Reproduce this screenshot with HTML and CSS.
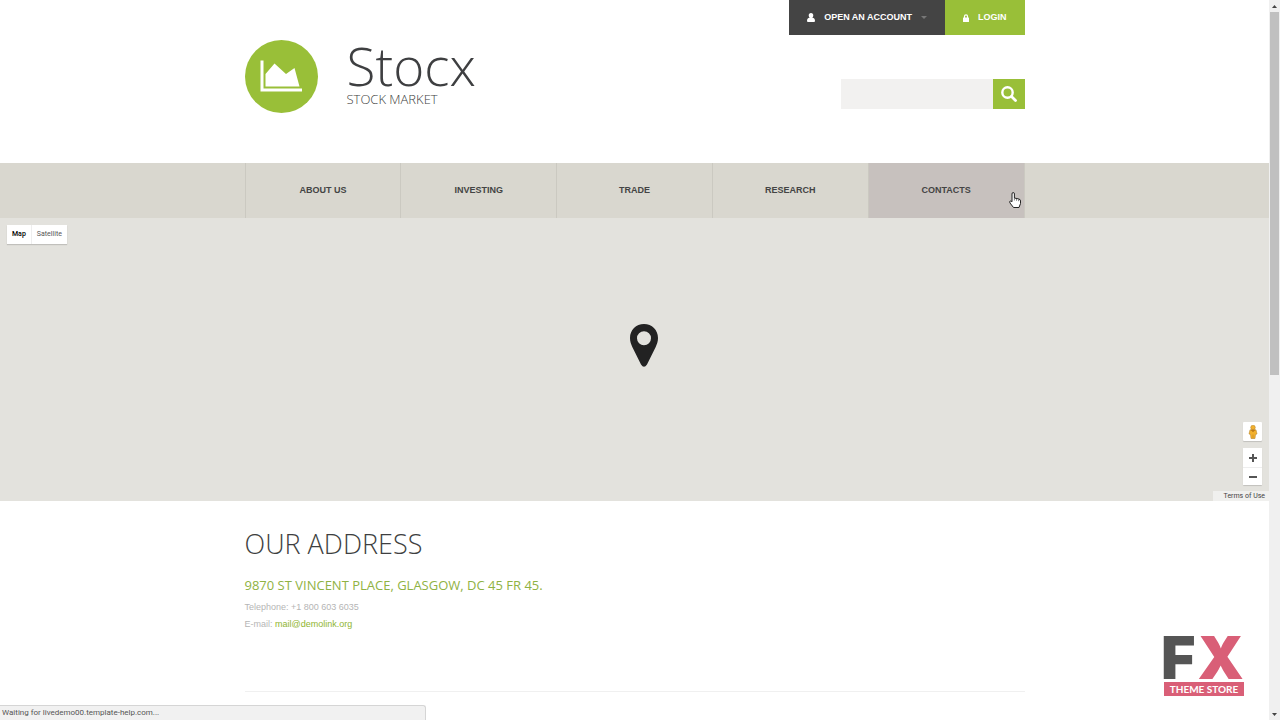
FILE: index.html
```
<!DOCTYPE html>
<html lang="en">
  <head>
    <meta charset="UTF-8" />
    <title>Stocx - Contacts</title>
    <link rel="stylesheet" href="styles.css">
  </head>
  <body>
    <div class="page">
      <header class="container header">
        <a class="brand" href="#">
          <svg class="brand-icon" viewBox="0 0 73 73" aria-hidden="true">
            <circle cx="36.500" cy="36.500" r="36.500" fill="#99bf38" />
            <path d="M15.500 20.500h3v28h38.500v3H15.500z" fill="#fff" />
            <path d="M20.500 46.500V34l9-10.500L41 34l8.500-6 5 18.500z" fill="#fff" />
          </svg>
          <span class="brand-text">
            <span class="brand-name">Stocx</span>
            <span class="brand-slogan">STOCK MARKET</span>
          </span>
        </a>
        <div class="header-right">
          <div class="user-links">
            <a class="account" href="#">
              <svg class="icon-user" viewBox="0 0 8 9" aria-hidden="true">
                <path d="M4 0C5.500 0 6.300 1.100 6.300 2.500c0 1-.4 1.800-1 2.300C7.300 5 8 6.200 8 8q0 1-1 1H1Q0 9 0 8c0-1.800.7-3 2.700-3.200-.6-.5-1-1.300-1-2.300C1.700 1.100 2.500 0 4 0z" fill="#fff" />
              </svg>
              <span>OPEN AN ACCOUNT</span>
              <svg class="icon-caret" viewBox="0 0 6 3" aria-hidden="true"><path d="M0 0h6L3 3z" fill="#777" /></svg>
            </a>
            <a class="login" href="#">
              <svg class="icon-lock" viewBox="0 0 6 8" aria-hidden="true">
                <path d="M1.500 4V2.300a1.500 1.500 0 0 1 3 0V4" fill="none" stroke="#fff" stroke-width="1.200" />
                <rect y="3.500" width="6" height="4.500" rx=".5" fill="#fff" />
              </svg>
              <span>LOGIN</span>
            </a>
          </div>
          <form class="search">
            <input type="text" aria-label="Search" />
            <button type="submit" aria-label="Search">
              <svg viewBox="0 0 16 16" aria-hidden="true">
                <circle cx="6.500" cy="6.500" r="5.200" fill="none" stroke="#fff" stroke-width="2.400" />
                <path d="M10.500 10.500l4 4" stroke="#fff" stroke-width="2.800" stroke-linecap="round" />
              </svg>
            </button>
          </form>
        </div>
      </header>

      <nav class="nav">
        <div class="container nav-list">
          <a href="#">ABOUT US</a>
          <a href="#">INVESTING</a>
          <a href="#">TRADE</a>
          <a href="#">RESEARCH</a>
          <a class="current" href="#">CONTACTS
            <svg class="cursor" viewBox="0 0 12 16" aria-hidden="true">
              <path d="M3 9V2q0-1.500 1.200-1.500T5.400 2v4l4.500 1q1.600.4 1.600 2v2.500L10 15.500H4.500L1 11Q.2 9.500 1.200 9q.9-.4 1.800.8z" fill="#fff" stroke="#222" />
              <path d="M5.400 6v2.500M7.500 6.800v2M9.500 7.200v2" stroke="#555" stroke-width=".7" />
            </svg>
          </a>
        </div>
      </nav>

      <section class="map" aria-label="Map">
        <div class="map-type">
          <button class="active" type="button">Map</button>
          <button type="button">Satellite</button>
        </div>
        <svg class="marker" viewBox="0 0 28 43" aria-hidden="true">
          <path fill-rule="evenodd" d="M14 0C6 0 0 6 0 14c0 3.500 1 6 2.300 9L11 40.500q3 4.500 6 0L25.700 23C27 20 28 17.500 28 14 28 6 22 0 14 0zm0 7.200a7 7 0 1 1 0 14 7 7 0 0 1 0-14z" fill="#222" />
        </svg>
        <div class="map-controls">
          <button class="pegman" type="button" aria-label="Street View">
            <svg viewBox="0 0 10 14" aria-hidden="true">
              <circle cx="5" cy="2.500" r="2.300" fill="#f2b02c" stroke="#ae7d22" stroke-width=".5" />
              <path d="M2 4.800h6L9 9l-1.500.5L7 13.500H3L2.500 9.500 1 9z" fill="#f2b02c" stroke="#ae7d22" stroke-width=".5" />
              <path d="M3 5h4L5 7zM5 9.500v4" fill="#bd7a18" stroke="#bd7a18" stroke-width=".5" />
            </svg>
          </button>
          <div class="zoom">
            <button type="button" aria-label="Zoom in">
              <svg viewBox="0 0 8 8" aria-hidden="true"><path d="M0 4h8M4 0v8" stroke="#555" stroke-width="2" /></svg>
            </button>
            <button type="button" aria-label="Zoom out">
              <svg viewBox="0 0 8 8" aria-hidden="true"><path d="M0 4h8" stroke="#555" stroke-width="2" /></svg>
            </button>
          </div>
        </div>
        <a class="terms" href="#">Terms of Use</a>
      </section>

      <main class="container content">
        <h2>OUR ADDRESS</h2>
        <address>
          <strong>9870 ST VINCENT PLACE, GLASGOW, DC 45 FR 45.</strong>
          <span>Telephone: +1 800 603 6035</span>
          <span>E-mail: <a href="mailto:mail@demolink.org">mail@demolink.org</a></span>
        </address>
      </main>
    </div>

    <div class="scrollbar" aria-hidden="true">
      <svg viewBox="0 0 5 3"><path d="M0 3h5L2.500 0z" fill="#444" /></svg>
      <div class="thumb"></div>
      <svg viewBox="0 0 5 3"><path d="M0 0h5L2.500 3z" fill="#444" /></svg>
    </div>

    <div class="status">Waiting for livedemo00.template-help.com...</div>

    <div class="store">
      <div class="store-fx"><span>F</span><span class="pink">X</span></div>
      <div class="store-name">THEME STORE</div>
    </div>
  </body>
</html>
```
FILE: styles.css
```
* {
  box-sizing: border-box;
}
body {
  margin: 0;
  display: flex;
  height: 100vh;
  overflow: hidden;
  background: #fff;
  color: #444;
  font: 9px/17px "Liberation Sans", Arial, sans-serif;
}
a {
  text-decoration: none;
}
svg {
  display: block;
}
button {
  padding: 0;
  border: 0;
  font: inherit;
}
.page {
  flex: 1;
  min-width: 0;
}
.container {
  width: 100%;
  max-width: 780px;
  margin: 0 auto;
}

/* header */
.header {
  display: flex;
  justify-content: space-between;
  padding-bottom: 50px;
}
.brand {
  display: flex;
  gap: 29px;
  padding-top: 40px;
  color: #3e3f41;
  font-family: "Open Sans", sans-serif;
  font-weight: 300;
}
.brand-icon {
  width: 73px;
  height: 73px;
}
.brand-text {
  display: flex;
  flex-direction: column;
}
.brand-name {
  font-size: 53px;
  line-height: 52px;
}
.brand-slogan {
  font-size: 13px;
  line-height: 14px;
}
.header-right {
  display: flex;
  flex-direction: column;
  align-items: flex-end;
  gap: 44px;
}
.user-links {
  display: flex;
  height: 35px;
  font-weight: bold;
}
.user-links a {
  display: flex;
  align-items: center;
  gap: 9px;
  padding: 0 18px;
  color: #fff;
}
.user-links .account {
  background: #444;
}
.user-links .login {
  background: #99bf38;
}
.icon-user {
  width: 8px;
  height: 9px;
}
.icon-caret {
  width: 6px;
  height: 3px;
}
.icon-lock {
  width: 6px;
  height: 8px;
}
.search {
  display: flex;
  height: 30px;
}
.search input {
  width: 152px;
  padding: 0 8px;
  border: 0;
  background: #f2f1f0;
}
.search button {
  display: flex;
  align-items: center;
  justify-content: center;
  width: 32px;
  background: #99bf38;
}
.search svg {
  width: 16px;
  height: 16px;
}

/* navigation */
.nav {
  background: #d9d7cf;
}
.nav-list {
  display: grid;
  grid-template-columns: repeat(5, 1fr);
  border-right: 1px solid #cbc9c1;
}
.nav a {
  position: relative;
  border-left: 1px solid #cbc9c1;
  color: #444;
  font-weight: bold;
  line-height: 55px;
  text-align: center;
}
.nav .current {
  background: #c7c1be;
}
.cursor {
  position: absolute;
  right: 3px;
  bottom: 10px;
  width: 12px;
  height: 16px;
}

/* map */
.map {
  position: relative;
  display: flex;
  align-items: center;
  justify-content: center;
  height: 283px;
  background: #e3e2dd;
  font: 7px/11px Roboto, sans-serif;
}
.map button {
  display: flex;
  align-items: center;
  justify-content: center;
  background: #fff;
}
.map-type {
  position: absolute;
  top: 7px;
  left: 7px;
  display: flex;
  height: 19px;
  box-shadow: 0 1px 1px rgba(0, 0, 0, 0.15);
}
.map-type button {
  padding: 0 5px;
  color: #565656;
}
.map-type .active {
  border-right: 1px solid #eee;
  color: #000;
  font-weight: 500;
}
.marker {
  width: 28px;
  height: 43px;
  margin: 0 0 28px 18px;
}
.map-controls {
  position: absolute;
  right: 7px;
  bottom: 16px;
  display: flex;
  flex-direction: column;
  gap: 7px;
}
.map-controls button {
  width: 19px;
  height: 19px;
}
.map-controls svg {
  width: 8px;
  height: 8px;
}
.map-controls .pegman,
.zoom {
  border-radius: 1px;
  box-shadow: 0 1px 1px rgba(0, 0, 0, 0.15);
}
.map-controls .pegman svg {
  width: 10px;
  height: 14px;
}
.zoom button + button {
  height: 18px;
  border-top: 1px solid #eee;
}
.terms {
  position: absolute;
  right: 0;
  bottom: 0;
  padding: 0 4px 0 11px;
  background: #f0f0ee;
  color: #444;
  line-height: 10px;
}

/* address */
.content {
  padding-top: 24px;
  border-bottom: 1px solid #f0f0f0;
}
.content h2 {
  margin: 0;
  color: #3e3f41;
  font: 300 27px/38px "Open Sans", sans-serif;
}
address {
  display: flex;
  flex-direction: column;
  padding: 12px 0 58px;
  color: #b5b5b5;
  font-style: normal;
}
address strong {
  margin-bottom: 4px;
  color: #8fb243;
  font: 400 13px/20px "Open Sans", sans-serif;
}
address a {
  color: #8fb52f;
}

/* browser scrollbar and status line */
.scrollbar {
  display: flex;
  flex-direction: column;
  align-items: center;
  width: 11px;
  padding: 5px 1px 4px;
  background: #f0f0f0;
}
.scrollbar svg {
  width: 5px;
  height: 3px;
}
.thumb {
  width: 100%;
  height: 51%;
  margin: 4px 0 auto;
  background: #c0c0c0;
}
.status {
  position: absolute;
  bottom: 0;
  left: 0;
  width: 426px;
  padding: 0 2px;
  border: solid #d5d5d5;
  border-width: 1px 1px 0 0;
  border-radius: 0 3px 0 0;
  background: #f1f1f1;
  color: #555;
  font: 8px/14px Roboto, sans-serif;
}

/* store badge */
.store {
  position: absolute;
  right: 36px;
  bottom: 24px;
  width: 80px;
}
.store-fx {
  display: flex;
  justify-content: space-between;
  margin-left: -3px;
  color: #555;
  font: 900 59px/49px Inter, sans-serif;
}
.store-fx .pink {
  color: #d95f77;
}
.store-name {
  background: #d95f77;
  color: #fff;
  font: bold 10px/14px Lato, sans-serif;
  text-align: center;
}
```
